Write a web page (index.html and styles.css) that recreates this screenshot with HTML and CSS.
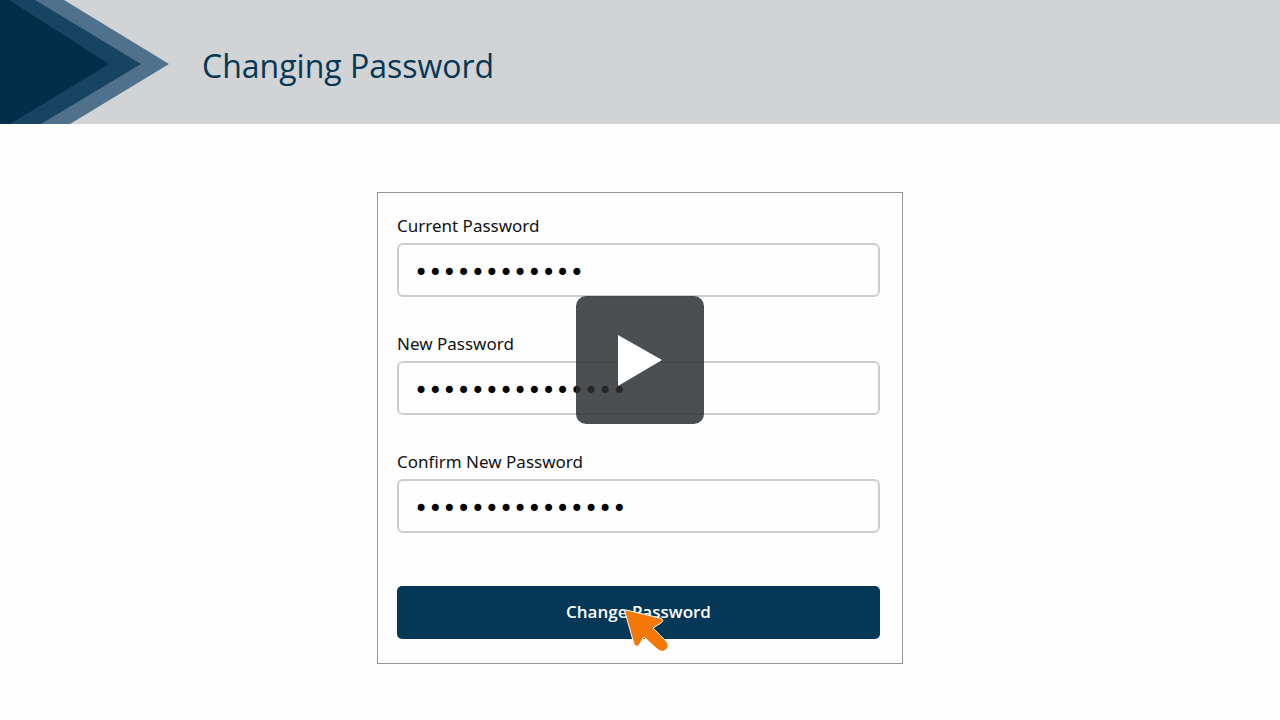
FILE: index.html
```html
<!DOCTYPE html>
<html lang="en">
<head>
  <meta charset="UTF-8">
  <meta name="viewport" content="width=device-width, initial-scale=1.0">
  <title>Changing Password</title>
  <link rel="stylesheet" href="styles.css">
</head>
<body>

<header class="banner">
  <svg class="chevrons" viewBox="0 0 170 124" aria-hidden="true">
    <path fill="#50718c" d="M0 0H64L169 64L70 124H0Z"/>
    <path fill="#174463" d="M0 0H35L141 64L41 124H0Z"/>
    <path fill="#032e48" d="M0 0H9L109 64L10 124H0Z"/>
  </svg>
  <h1>Changing Password</h1>
</header>

<main>
  <form class="card">
    <div class="field">
      <label for="current">Current Password</label>
      <input type="password" id="current" value="abcdefghijkl">
    </div>
    <div class="field">
      <label for="new">New Password</label>
      <input type="password" id="new" value="abcdefghijklmno">
    </div>
    <div class="field">
      <label for="confirm">Confirm New Password</label>
      <input type="password" id="confirm" value="abcdefghijklmno">
    </div>
    <div class="actions">
      <button type="button" class="submit">Change Password</button>
      <svg class="cursor" viewBox="0 0 46 46" aria-hidden="true">
        <path fill="#f57806" stroke="#fff" stroke-width="1" stroke-linejoin="round" d="M2 1L36 9Q41 11 37 14L29 19L42 32Q46 37 42 41Q38 44 33 40L20 28L15 36Q12 39 10 35L1 3Q0 1 2 1Z"/>
      </svg>
    </div>
  </form>
</main>

<button type="button" class="play" aria-label="Play video">
  <svg viewBox="0 0 128 128" aria-hidden="true">
    <path fill="#fff" d="M42 39L86 64L42 90Z"/>
  </svg>
</button>

</body>
</html>
```
FILE: styles.css
```css
* { box-sizing: border-box; margin: 0; padding: 0; }

body {
  min-height: 100vh;
  font-family: "Open Sans", "Noto Sans", sans-serif;
  background: #fefefe;
}

.banner {
  display: flex;
  align-items: center;
  gap: 32px;
  background: #d1d3d4;
}

.chevrons {
  display: block;
  width: 170px;
  height: 124px;
}

.banner h1 {
  font-size: 32px;
  font-weight: 400;
  line-height: 44px;
  padding-top: 7px;
  color: #053756;
}

main {
  display: flex;
  justify-content: center;
  padding: 68px 16px 40px;
}

.card {
  display: flex;
  flex-direction: column;
  gap: 35px;
  width: 100%;
  max-width: 526px;
  padding: 21px 22px 24px 19px;
  border: 1px solid #999;
}

.field {
  display: flex;
  flex-direction: column;
  gap: 5px;
}

.field label {
  font-family: "Noto Sans", sans-serif;
  font-size: 17px;
  line-height: 24px;
  color: #111;
}

.field input {
  width: 100%;
  height: 54px;
  padding: 6px 15px 0;
  border: 2px solid #ccc;
  border-radius: 6px;
  background: #fefefe;
  color: #000;
  font-family: "DejaVu Sans", sans-serif;
  font-size: 24px;
}

.actions {
  position: relative;
  margin-top: 18px;
}

.submit {
  display: block;
  width: 100%;
  height: 53px;
  padding-bottom: 2px;
  border: none;
  border-radius: 5px;
  background: #053756;
  color: #fff;
  font-family: inherit;
  font-size: 17px;
  font-weight: 600;
  cursor: pointer;
}

/* pointer over the submit button */
.cursor {
  position: absolute;
  top: 23px;
  left: 47%;
  width: 46px;
  height: 46px;
  pointer-events: none;
}

.play {
  position: fixed;
  inset: 0;
  margin: auto;
  width: 128px;
  height: 128px;
  border: none;
  border-radius: 10px;
  background: rgba(44, 48, 51, 0.85);
  cursor: pointer;
}

.play svg {
  display: block;
  width: 100%;
  height: 100%;
}
```
